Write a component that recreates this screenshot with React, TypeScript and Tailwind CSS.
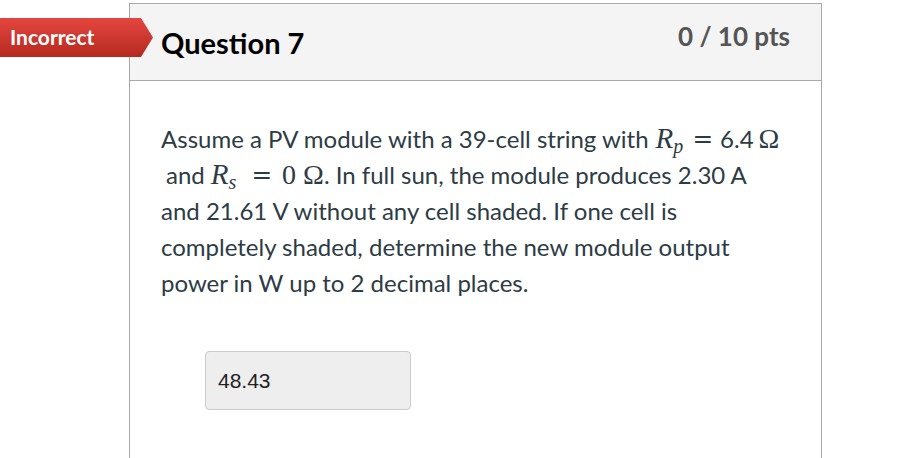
import React from "react";

const Serif = ({ children, className = "" }: { children: React.ReactNode; className?: string }) => (
  <span className={`inline-block leading-none [font-family:'Liberation_Serif',serif] ${className}`}>{children}</span>
);

const Eq = ({ className = "" }: { className?: string }) => (
  <span className={`inline-block leading-none [font-family:'DejaVu_Serif',serif] text-[26px] scale-x-[0.95] ${className}`}>=</span>
);

export default function App() {
  return (
    <div className="relative w-[923px] h-[458px] overflow-hidden bg-white [font-family:Lato,sans-serif]">
      <div className="flex">
        <div className="w-[129px] shrink-0" />
        <div className="mt-[3px] w-[693px] h-[500px] border border-[#a8a8a8] border-b-0">
          <div className="flex h-[77px] justify-between border-b border-[#a8a8a8] bg-[#f4f4f4] pl-[31px] pr-[31px]">
            <div className="pt-[19px] text-[29px] font-bold leading-[40px] text-black">Question 7</div>
            <div className="pt-[14px] text-[26px] font-bold leading-[36px] text-[#555]">0 / 10 pts</div>
          </div>
          <div className="pl-[31px] pt-[40px] text-[24px] leading-[36px] text-[#2d3b45]">
            <div className="h-[36px] whitespace-nowrap">
              Assume a PV module with a 39-cell string with
              <Serif className="ml-[7px] text-[29px] italic">R</Serif>
              <Serif className="relative top-[5px] text-[20px] italic">p</Serif>
              <Eq className="ml-[9px] mr-[6px]" />
              6.4
              <Serif className="ml-[5px] text-[28px]">Ω</Serif>
            </div>
            <div className="h-[36px] whitespace-nowrap pl-[5px]">
              and
              <Serif className="ml-[6px] text-[29px] italic">R</Serif>
              <Serif className="relative top-[5px] text-[20px] italic">s</Serif>
              <Eq className="ml-[15px] mr-[9px]" />
              <Serif className="text-[28px]">0</Serif>
              <Serif className="ml-[7px] text-[28px]">Ω</Serif>. In full sun, the module produces 2.30 A
            </div>
            <div className="h-[36px] whitespace-nowrap">and 21.61 V without any cell shaded. If one cell is</div>
            <div className="h-[36px] whitespace-nowrap">completely shaded, determine the new module output</div>
            <div className="h-[36px] whitespace-nowrap">power in W up to 2 decimal places.</div>
            <div className="ml-[44px] mt-[50px] flex h-[59px] w-[206px] items-center rounded-[4px] border border-[#cccccc] bg-[#eeeeee] pl-[12px] [font-family:'Liberation_Sans',Arial,sans-serif] text-[21px] text-[#222]">
              48.43
            </div>
          </div>
        </div>
      </div>
      <div className="absolute left-0 top-[18px] flex h-[39px] w-[153px] items-center bg-gradient-to-b from-[#e4463f] to-[#b5291f] pb-[2px] pl-[10px] text-[21px] font-bold text-white [clip-path:polygon(0_0,141px_0,153px_50%,141px_100%,0_100%)]">
        Incorrect
      </div>
    </div>
  );
}
